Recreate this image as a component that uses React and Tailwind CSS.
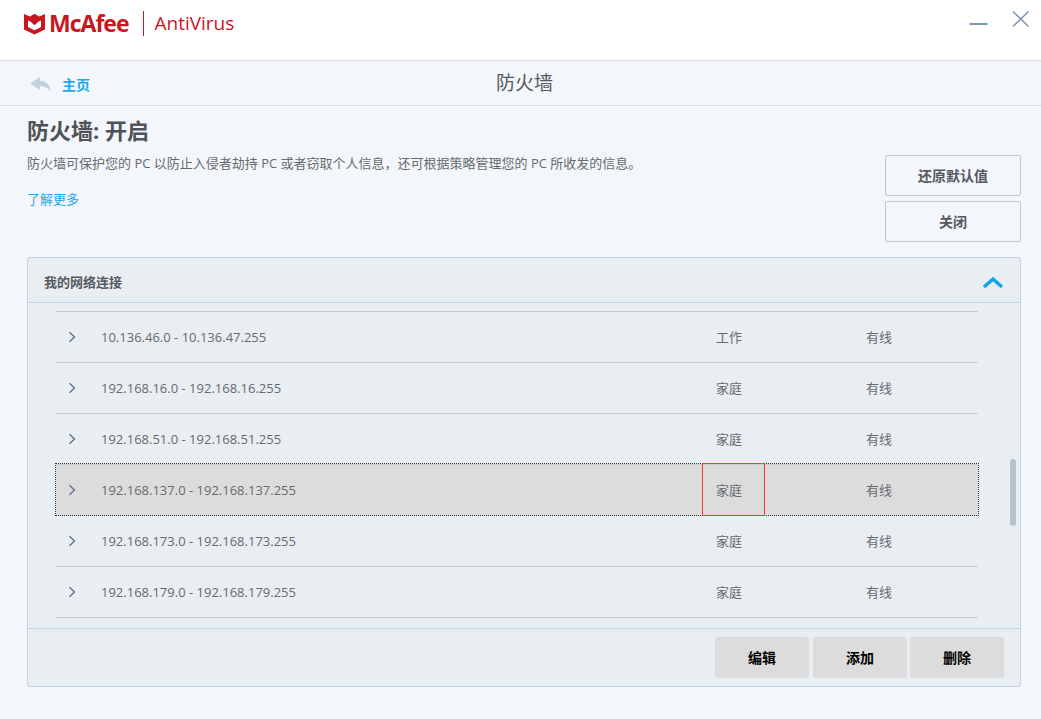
import React from 'react';

const rows = [
  { range: '10.136.46.0 - 10.136.47.255', type: '工作', conn: '有线' },
  { range: '192.168.16.0 - 192.168.16.255', type: '家庭', conn: '有线' },
  { range: '192.168.51.0 - 192.168.51.255', type: '家庭', conn: '有线' },
  { range: '192.168.137.0 - 192.168.137.255', type: '家庭', conn: '有线', selected: true },
  { range: '192.168.173.0 - 192.168.173.255', type: '家庭', conn: '有线' },
  { range: '192.168.179.0 - 192.168.179.255', type: '家庭', conn: '有线' },
];

const font = { fontFamily: '"Open Sans", "Noto Sans CJK SC", sans-serif' };

const Row = ({ range, type, conn, selected }) => (
  <div
    className={`relative flex h-[51px] items-center pt-[2px] text-[13px] text-[#666b70] ${
      selected ? 'border-b border-transparent bg-[#dcdcdc]' : 'border-b border-[#c9cccf]'
    }`}
  >
    {selected && (
      <div className="absolute left-[-1px] right-[-1px] top-[-2px] bottom-[-1px] border border-dotted border-[#333]"></div>
    )}
    {selected && (
      <div className="absolute left-[646px] top-[-2px] bottom-[-1px] w-[63px] border border-[#f03a3a]"></div>
    )}
    <svg width="8" height="12" viewBox="0 0 8 12" className="ml-[12px] mb-[2px] shrink-0">
      <path d="M1.5 1.2 L6.5 6 L1.5 10.8" fill="none" stroke="#5b6f87" strokeWidth="1.3" />
    </svg>
    <span className="ml-[25px] w-[615px] shrink-0">{range}</span>
    <span className="w-[150px] shrink-0">{type}</span>
    <span>{conn}</span>
  </div>
);

const App = () => {
  return (
    <div className="flex h-[719px] w-[1041px] flex-col overflow-hidden bg-[#f3f6fa]" style={font}>
      {/* top bar with logo */}
      <div className="flex h-[61px] shrink-0 items-start border-b border-[#dcdfe8] bg-white">
        <svg width="21" height="22" viewBox="0 0 21 22" className="ml-[24px] mt-[13px] shrink-0">
          <path
            fillRule="evenodd"
            d="M0 1 L6 3.6 L10.5 0.8 L15 3.6 L21 1 V16.5 L10.5 21.5 L0 16.5 Z M4 7.5 V14 L10.5 17.2 L17 14 V7.5 L14.6 8.6 L10.5 12.2 L6.4 8.6 Z"
            fill="#c8171e"
          />
        </svg>
        <span className="ml-[4px] mt-[8px] text-[23px] font-bold leading-[30px] tracking-[-1px] text-[#c8171e]">McAfee</span>
        <div className="ml-[15px] mt-[11px] h-[25px] w-px bg-[#c8171e]"></div>
        <span className="ml-[10px] mt-[9px] text-[19px] leading-[28px] text-[#c8171e]">AntiVirus</span>
        <svg width="70" height="30" viewBox="0 0 70 30" className="ml-auto mt-[8px] mr-[2px]">
          <path d="M0.5 16 H18.5" stroke="#7f99b8" strokeWidth="2" />
          <path d="M44 3.5 L59.5 18.5 M59.5 3.5 L44 18.5" stroke="#7f99b8" strokeWidth="1.6" fill="none" />
        </svg>
      </div>

      {/* nav bar */}
      <div className="relative flex h-[45px] shrink-0 items-center border-b border-[#dcdfe8]">
        <svg width="21" height="14" viewBox="0 0 21 14" className="ml-[30px] mt-[2px]">
          <path d="M0 6.5 L10 0 V3.8 C16.5 4 20 8 20.5 14 C17.5 10.5 14.5 9.2 10 9.2 V13 Z" fill="#c3d0e0" />
        </svg>
        <span className="ml-[11px] mt-[2px] text-[14px] font-bold text-[#1ea7ec]">主页</span>
        <span className="absolute inset-x-0 pl-[8px] text-center text-[19px] text-[#55595e]">防火墙</span>
      </div>

      {/* intro */}
      <div className="flex h-[151px] shrink-0 justify-between pl-[27px] pr-[20px]">
        <div>
          <h1 className="mt-[8px] text-[22px] font-bold leading-[32px] text-[#4f5357]">防火墙: 开启</h1>
          <p className="mt-[7px] text-[13px] leading-[20px] text-[#666b70]">
            防火墙可保护您的 PC 以防止入侵者劫持 PC 或者窃取个人信息，还可根据策略管理您的 PC 所收发的信息。
          </p>
          <a className="mt-[16px] block text-[13px] leading-[20px] text-[#1ea7ec]">了解更多</a>
        </div>
        <div className="mt-[49px] flex w-[136px] flex-col gap-[5px]">
          <button className="h-[41px] rounded-[2px] border border-[#c3c6ca] text-[14px] font-bold text-[#55595e]">还原默认值</button>
          <button className="h-[41px] rounded-[2px] border border-[#c3c6ca] text-[14px] font-bold text-[#55595e]">关闭</button>
        </div>
      </div>

      {/* network panel */}
      <div className="ml-[27px] flex h-[430px] w-[994px] flex-col rounded-[3px] border border-[#c2d3e6] bg-[#e9eef3]">
        <div className="flex h-[45px] shrink-0 items-center justify-between border-b border-[#c2d3e6] px-[16px]">
          <span className="mt-[5px] text-[13px] font-bold text-[#55595e]">我的网络连接</span>
          <svg width="22" height="13" viewBox="0 0 22 13" className="mt-[5px]">
            <path d="M2 11 L11 3 L20 11" fill="none" stroke="#0ea5ea" strokeWidth="3.4" />
          </svg>
        </div>
        <div className="relative h-[326px] shrink-0 overflow-hidden border-b border-[#c2d3e6] pt-[8px]">
          <div className="ml-[28px] w-[922px]">
            <div className="border-b border-[#c9cccf]"></div>
            {rows.map((row) => (
              <Row key={row.range} {...row} />
            ))}
          </div>
          <div className="absolute left-[982px] top-[156px] h-[67px] w-[6px] rounded-[3px] bg-[#b8c2ce]"></div>
        </div>
        <div className="flex flex-1 items-start justify-end pr-[16px] pt-[8px]">
          <button className="h-[41px] w-[94px] rounded-[2px] bg-[#dcdcdc] text-[14px] font-bold text-black">编辑</button>
          <button className="ml-[4px] h-[41px] w-[94px] rounded-[2px] bg-[#dcdcdc] text-[14px] font-bold text-black">添加</button>
          <button className="ml-[3px] h-[41px] w-[94px] rounded-[2px] bg-[#dcdcdc] text-[14px] font-bold text-black">删除</button>
        </div>
      </div>
    </div>
  );
};

export default App;
